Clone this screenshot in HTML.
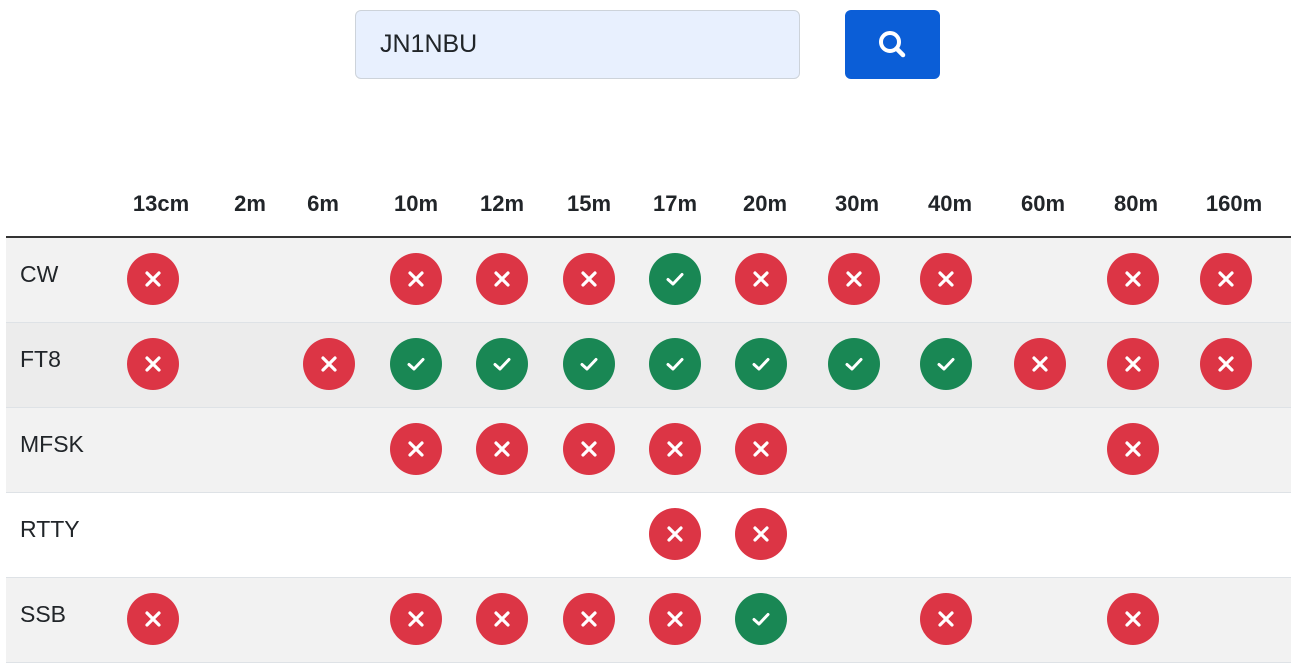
<!DOCTYPE html>
<html><head><style>
body{margin:0;width:1299px;height:671px;background:#fff;font-family:"Liberation Sans",Arial,sans-serif;position:relative;overflow:hidden;color:#212529}
.inp{position:absolute;left:355px;top:10px;background:#e8f0fe;border:1px solid #cdd3da;border-radius:6px;font-size:25px;line-height:67px;padding-left:24px;box-sizing:border-box;width:445px;height:69px}
.btn{position:absolute;left:845px;top:10px;width:95px;height:69px;background:#0b5ed7;border-radius:6px}
.h{position:absolute;top:191px;font-weight:bold;font-size:22px;transform:translateX(-50%)}
.hl{position:absolute;left:6px;top:236px;width:1285px;height:2px;background:#333}
.row{position:absolute;left:6px;width:1285px;height:84px;border-bottom:1px solid #dee2e6}
.lab{position:absolute;left:14px;top:0;line-height:72px;font-size:23px}
.c{position:absolute;width:52px;height:52px;border-radius:50%;transform:translate(-50%,-50%)}
.x{background:#dc3545}.k{background:#198754}
.c svg{position:absolute;left:16px;top:16px}
</style></head><body>
<div class="inp">JN1NBU</div>
<div class="btn"><svg width="95" height="69" viewBox="0 0 95 69"><circle cx="45" cy="32" r="9" fill="none" stroke="#fff" stroke-width="4"/><line x1="51.5" y1="38.5" x2="58" y2="45" stroke="#fff" stroke-width="4.5" stroke-linecap="round"/></svg></div>
<div id="t"></div>
<script>
var cols=[["13cm",161],["2m",250],["6m",323],["10m",416],["12m",502],["15m",589],["17m",675],["20m",765],["30m",857],["40m",950],["60m",1043],["80m",1136],["160m",1234]];
var cx=[153,250,329,416,502,589,675,761,854,946,1040,1133,1226];
var rows=[["CW","x..xxxkxxx.xx","#f2f2f2"],["FT8","x.xkkkkkkkxxx","#ececec"],["MFSK","...xxxxx...x.","#f2f2f2"],["RTTY","......xx.....","#fff"],["SSB","x..xxxxk.x.x.","#f2f2f2"]];
var h='';
cols.forEach(function(c){h+='<div class="h" style="left:'+c[1]+'px">'+c[0]+'</div>'});
h+='<div class="hl"></div>';
var X='<svg width="20" height="20" viewBox="0 0 20 20"><path d="M4 4L16 16M16 4L4 16" stroke="#fff" stroke-width="3.2" stroke-linecap="round"/></svg>';
var K='<svg width="20" height="20" viewBox="0 0 20 20"><path d="M3 10.5L8 15L17 5.5" fill="none" stroke="#fff" stroke-width="3" stroke-linecap="round" stroke-linejoin="round"/></svg>';
rows.forEach(function(r,i){var top=238+i*85;
h+='<div class="row" style="top:'+top+'px;background:'+r[2]+'"><div class="lab">'+r[0]+'</div></div>';
for(var j=0;j<13;j++){var s=r[1][j];if(s=='.')continue;
h+='<div class="c '+s+'" style="left:'+cx[j]+'px;top:'+(top+41)+'px">'+(s=='x'?X:K)+'</div>';}
});
document.getElementById('t').innerHTML=h;
</script>
</body></html>
